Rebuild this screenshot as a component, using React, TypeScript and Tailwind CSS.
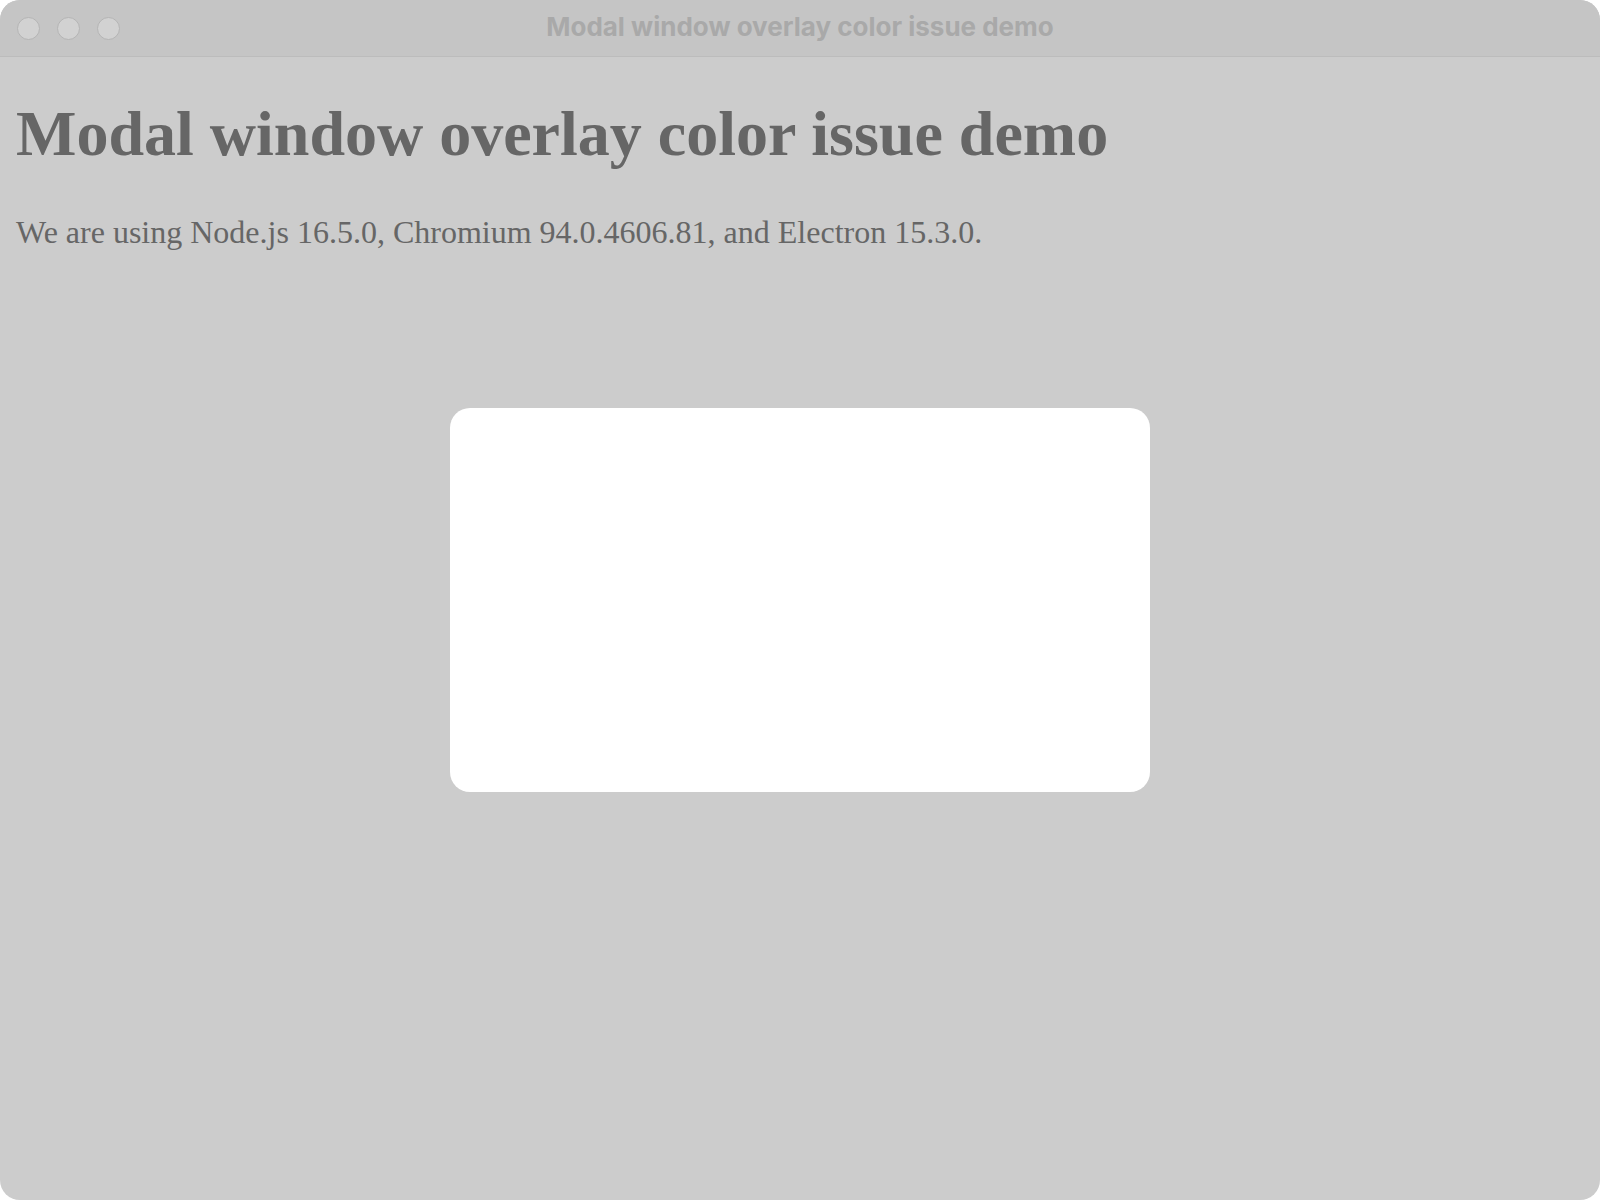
import React from 'react';

// Three inactive window controls, greyed out under the overlay
function TrafficLights() {
  return (
    <div className="flex items-center gap-[17px] pl-[17px]">
      {[0, 1, 2].map((i) => (
        <span
          key={i}
          className="h-[23px] w-[23px] rounded-full border border-[#b4b4b4] bg-[#d2d2d2]"
        />
      ))}
    </div>
  );
}

export default function App() {
  return (
    <div className="h-[1200px] w-[1600px] bg-white">
      <div className="relative flex h-full w-full flex-col overflow-hidden rounded-[20px] bg-[#cccccc]">
        {/* Title bar */}
        <div className="relative flex h-[57px] shrink-0 items-center border-b border-[#bcbcbc] bg-[#c5c5c5]">
          <TrafficLights />
          <div
            className="absolute inset-x-0 top-0 flex h-[53px] items-center justify-center text-[26px] font-bold text-[#a9a9a9]"
            style={{ fontFamily: 'Inter, Roboto, "Liberation Sans", sans-serif' }}
          >
            Modal window overlay color issue demo
          </div>
        </div>

        {/* Page body */}
        <div
          className="flex-1 px-4 text-[#666666]"
          style={{ fontFamily: '"Liberation Serif", "Times New Roman", serif' }}
        >
          <h1 className="mt-[40px] mb-[43px] text-[64px] font-bold leading-[1.15]">
            Modal window overlay color issue demo
          </h1>
          <p className="text-[32px] leading-[1.15]">
            We are using Node.js 16.5.0, Chromium 94.0.4606.81, and Electron 15.3.0.
          </p>
        </div>

        {/* Modal dialog, centred over the page */}
        <div className="pointer-events-none absolute inset-0 flex items-center justify-center">
          <div className="h-[384px] w-[700px] rounded-[20px] bg-white" />
        </div>
      </div>
    </div>
  );
}
